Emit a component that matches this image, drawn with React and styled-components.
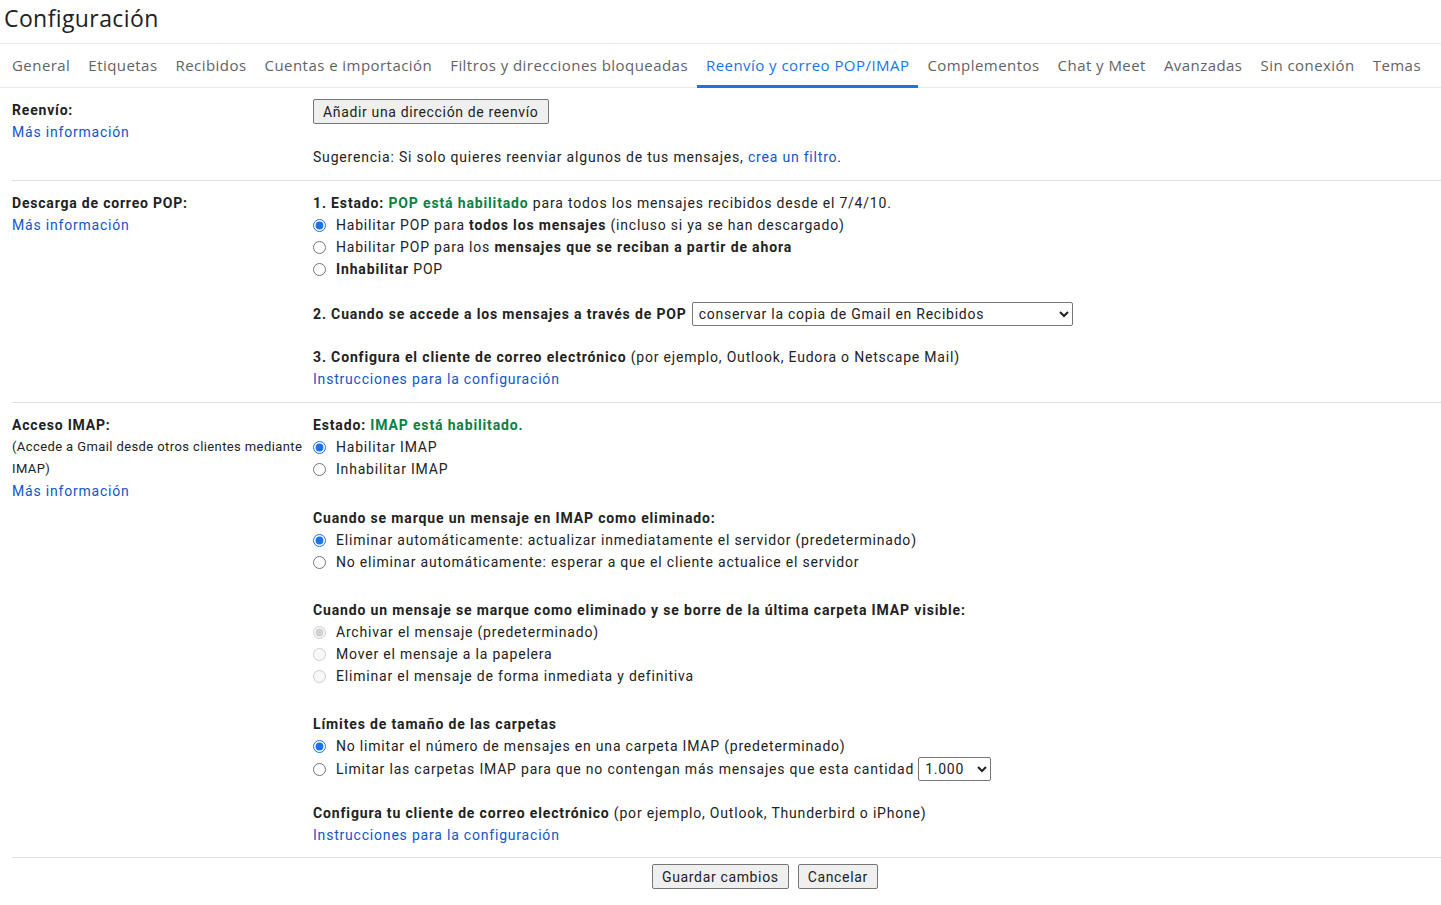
import styled, { createGlobalStyle } from 'styled-components'

const Global = createGlobalStyle`
    body{margin:0;background:#fff;color:#222;font-family:Roboto,"Liberation Sans",sans-serif;}
    *{box-sizing:border-box;}
`

const PageStyled = styled.div`
    width:1441px;
`
const TitleBar = styled.header`
    height:44px;
    display:flex;
    align-items:center;
    padding:0 0 8px 4px;
    border-bottom:1px solid #e8eaed;
    >h1{margin:0;font:400 23px "Open Sans",sans-serif;color:#202124;letter-spacing:.4px;}
`
const TabBar = styled.nav`
    display:flex;
    height:44px;
    padding-left:3px;
    border-bottom:1px solid #e8eaed;
`
const Tab = styled.a`
    display:flex;
    align-items:center;
    padding:1px 9px 0;
    font:500 15px "Open Sans",sans-serif;
    letter-spacing:.45px;
    color:${p => p.$active ? '#1a73e8' : '#5f6368'};
    border-bottom:3px solid ${p => p.$active ? '#1a73e8' : 'transparent'};
    margin-bottom:-1px;
    white-space:nowrap;
`
const Row = styled.section`
    display:grid;
    grid-template-columns:301px 1fr;
    margin-left:12px;
    padding:11px 0 ${p => p.$bottom ?? 12}px;
    border-bottom:1px solid #e0e0e0;
    font-size:14px;
    line-height:22px;
    letter-spacing:.8px;
`
const Side = styled.div`
    display:flex;
    flex-direction:column;
    >b{font-weight:700;}
    >small{font-size:13px;line-height:22px;letter-spacing:.4px;}
`
const Link = styled.a`
    color:#15c;
    text-decoration:none;
`
const Main = styled.div`
    display:flex;
    flex-direction:column;
`
const Group = styled.div`
    display:flex;
    flex-direction:column;
    margin-top:${p => p.$gap || 0}px;
`
const Line = styled.div`
    display:flex;
    align-items:center;
    min-height:22px;
    white-space:nowrap;
    >b{font-weight:700;white-space:pre;letter-spacing:.85px;}
    >span{white-space:pre;}
`
const Green = styled.span`
    color:#0b8043;
    font-weight:700;
    letter-spacing:.85px;
`
const Radio = styled.input.attrs({ type: 'radio' })`
    width:13px;
    height:13px;
    margin:0 10px 0 0;
    accent-color:#1a73e8;
`
const Select = styled.select`
    height:24px;
    width:${p => p.$w}px;
    margin-left:${p => p.$ml ?? 5}px;
    font:14px Roboto,sans-serif;
    letter-spacing:.75px;
    color:#222;
    border:1px solid #767676;
    border-radius:2px;
    background:#fff;
    padding:0 2px;
`
const Button = styled.button`
    height:25px;
    padding:0 9px;
    font:14px Roboto,sans-serif;
    letter-spacing:.65px;
    color:#222;
    background:#efefef;
    border:1px solid #767676;
    border-radius:2px;
`
const Footer = styled.footer`
    display:flex;
    gap:9px;
    padding:6px 0 0 640px;
    margin-left:12px;
`

const tabs = ['General', 'Etiquetas', 'Recibidos', 'Cuentas e importación', 'Filtros y direcciones bloqueadas', 'Reenvío y correo POP/IMAP', 'Complementos', 'Chat y Meet', 'Avanzadas', 'Sin conexión', 'Temas']

export default function App() {
    return <PageStyled>
        <Global />
        <TitleBar><h1>Configuración</h1></TitleBar>
        <TabBar>
            {tabs.map(t => <Tab key={t} $active={t === 'Reenvío y correo POP/IMAP'}>{t}</Tab>)}
        </TabBar>

        <Row>
            <Side>
                <b>Reenvío:</b>
                <Link href="#">Más información</Link>
            </Side>
            <Main>
                <Line><Button>Añadir una dirección de reenvío</Button></Line>
                <Group $gap={22}>
                    <Line><span>Sugerencia: Si solo quieres reenviar algunos de tus mensajes, </span><Link href="#">crea un filtro</Link>.</Line>
                </Group>
            </Main>
        </Row>

        <Row>
            <Side>
                <b>Descarga de correo POP:</b>
                <Link href="#">Más información</Link>
            </Side>
            <Main>
                <Group>
                    <Line><b>1. Estado: </b><Green>POP está habilitado</Green><span> para todos los mensajes recibidos desde el 7/4/10.</span></Line>
                    <Line><Radio name="pop" defaultChecked /><span>Habilitar POP para </span><b>todos los mensajes</b><span> (incluso si ya se han descargado)</span></Line>
                    <Line><Radio name="pop" /><span>Habilitar POP para los </span><b>mensajes que se reciban a partir de ahora</b></Line>
                    <Line><Radio name="pop" /><b>Inhabilitar</b><span> POP</span></Line>
                </Group>
                <Group $gap={22}>
                    <Line><b>2. Cuando se accede a los mensajes a través de POP</b>
                        <Select $w={381}><option>conservar la copia de Gmail en Recibidos</option></Select>
                    </Line>
                </Group>
                <Group $gap={20}>
                    <Line><b>3. Configura el cliente de correo electrónico</b><span> (por ejemplo, Outlook, Eudora o Netscape Mail)</span></Line>
                    <Line><Link href="#">Instrucciones para la configuración</Link></Line>
                </Group>
            </Main>
        </Row>

        <Row $bottom={11}>
            <Side>
                <b>Acceso IMAP:</b>
                <small>(Accede a Gmail desde otros clientes mediante IMAP)</small>
                <Link href="#">Más información</Link>
            </Side>
            <Main>
                <Group>
                    <Line><b>Estado: </b><Green>IMAP está habilitado.</Green></Line>
                    <Line><Radio name="imap" defaultChecked /><span>Habilitar IMAP</span></Line>
                    <Line><Radio name="imap" /><span>Inhabilitar IMAP</span></Line>
                </Group>
                <Group $gap={27}>
                    <Line><b>Cuando se marque un mensaje en IMAP como eliminado:</b></Line>
                    <Line><Radio name="del" defaultChecked /><span>Eliminar automáticamente: actualizar inmediatamente el servidor (predeterminado)</span></Line>
                    <Line><Radio name="del" /><span>No eliminar automáticamente: esperar a que el cliente actualice el servidor</span></Line>
                </Group>
                <Group $gap={26}>
                    <Line><b>Cuando un mensaje se marque como eliminado y se borre de la última carpeta IMAP visible:</b></Line>
                    <Line><Radio name="exp" defaultChecked disabled /><span>Archivar el mensaje (predeterminado)</span></Line>
                    <Line><Radio name="exp" disabled /><span>Mover el mensaje a la papelera</span></Line>
                    <Line><Radio name="exp" disabled /><span>Eliminar el mensaje de forma inmediata y definitiva</span></Line>
                </Group>
                <Group $gap={26}>
                    <Line><b>Límites de tamaño de las carpetas</b></Line>
                    <Line><Radio name="lim" defaultChecked /><span>No limitar el número de mensajes en una carpeta IMAP (predeterminado)</span></Line>
                    <Line><Radio name="lim" /><span>Limitar las carpetas IMAP para que no contengan más mensajes que esta cantidad</span>
                        <Select $w={73} $ml={4}><option>1.000</option></Select>
                    </Line>
                </Group>
                <Group $gap={21}>
                    <Line><b>Configura tu cliente de correo electrónico</b><span> (por ejemplo, Outlook, Thunderbird o iPhone)</span></Line>
                    <Line><Link href="#">Instrucciones para la configuración</Link></Line>
                </Group>
            </Main>
        </Row>

        <Footer>
            <Button>Guardar cambios</Button>
            <Button>Cancelar</Button>
        </Footer>
    </PageStyled>
}
